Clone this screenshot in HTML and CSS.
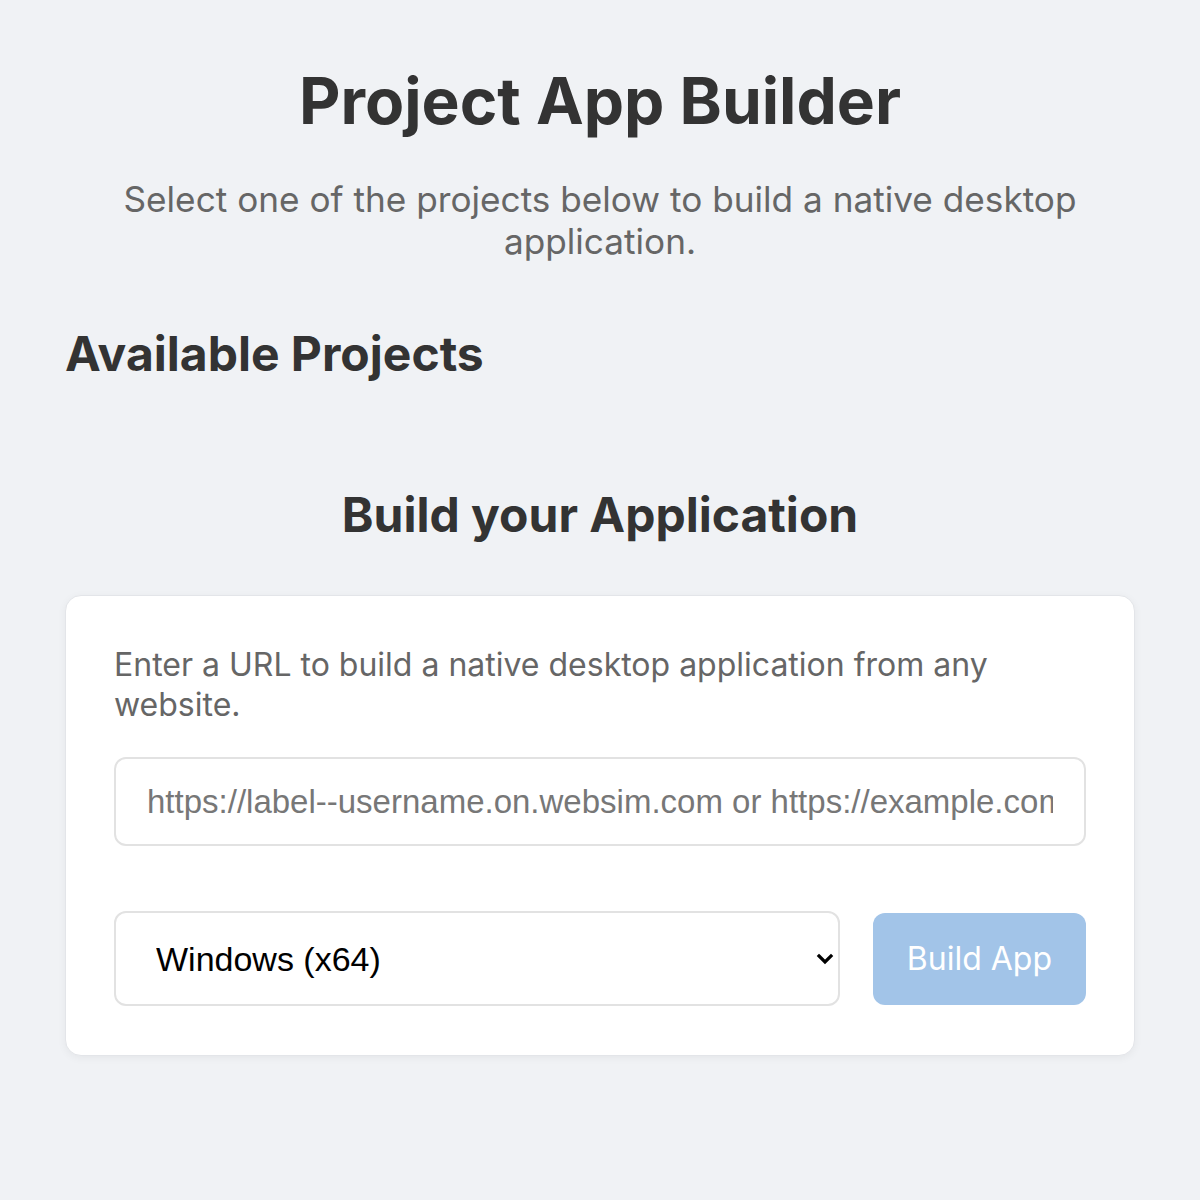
FILE: index.html
```html
<!DOCTYPE html>
<html lang="en">
    <head>
        <meta charset="utf-8">
        <meta name="viewport" content="width=device-width, initial-scale=1.0">
        <title>Project App Builder</title>
        <link rel="stylesheet" href="styles.css">
    </head>
    <body>
        <div id="app-container">
            <!-- page header -->
            <header class="page-header">
                <h1>Project App Builder</h1>
                <p class="subtitle">Select one of the projects below to build a native desktop application.</p>
            </header>

            <section id="projects">
                <h2 class="section-title">Available Projects</h2>
                <div id="projects-grid"></div>
            </section>

            <!-- builder form -->
            <section id="builder">
                <h2 class="builder-title">Build your Application</h2>
                <div class="card">
                    <p class="card-text">Enter a URL to build a native desktop application from any website.</p>
                    <input type="text" class="url-input" placeholder="https://label--username.on.websim.com or https://example.com">
                    <div class="build-row">
                        <div class="select-wrap">
                            <select class="platform-select">
                                <option>Windows (x64)</option>
                                <option>macOS (arm64)</option>
                                <option>Linux (x64)</option>
                            </select>
                            <!-- dropdown arrow -->
                            <svg class="select-arrow" width="18" height="12" viewBox="0 0 18 12">
                                <path d="M3 3 L9 9 L15 3" fill="none" stroke="#000" stroke-width="3.2" stroke-linecap="square"/>
                            </svg>
                        </div>
                        <button class="build-button" disabled>Build App</button>
                    </div>
                </div>
            </section>
        </div>
    </body>
</html>
```

FILE: styles.css
```css
/* page base */
body{
    font-family: Inter, "Noto Sans", sans-serif;
    background-color: #f0f2f5;
    color: #333;
    margin: 0;
}
#app-container{
    padding: 62px 65px 60px;
}
/* header */
.page-header{
    text-align: center;
}
.page-header h1{
    font-size: 64px;
    line-height: 78px;
    font-weight: 700;
    margin: 0 0 38px;
}
.subtitle{
    font-size: 35.2px;
    line-height: 42px;
    color: #666;
    margin: 0;
}
/* sections */
.section-title{
    font-size: 48px;
    line-height: 58px;
    font-weight: 700;
    margin: 63px 0 0;
}
#projects-grid{
    min-height: 103px;
}
.builder-title{
    font-size: 48px;
    line-height: 58px;
    font-weight: 700;
    text-align: center;
    margin: 0 0 51px;
}
/* the white card */
.card{
    background-color: #fff;
    border: 1px solid #e3e5e9;
    border-radius: 16px;
    padding: 49px 48px 49px;
    box-shadow: 0 2px 8px rgba(0, 0, 0, 0.05);
}
.card-text{
    font-size: 32px;
    line-height: 40px;
    color: #666;
    margin: 0 0 32px;
}
.url-input{
    display: block;
    box-sizing: border-box;
    width: 100%;
    height: 89px;
    padding: 0 31px;
    border: 2px solid #e2e2e2;
    border-radius: 12px;
    font-family: "Liberation Sans", Arial, sans-serif;
    font-size: 33px;
    color: #333;
    background-color: #fff;
}
.url-input::placeholder{
    color: #777;
}
.build-row{
    display: flex;
    align-items: center;
    gap: 33px;
    margin-top: 65px;
}
.select-wrap{
    flex: 1;
    position: relative;
}
.platform-select{
    display: block;
    width: 100%;
    box-sizing: border-box;
    height: 95px;
    padding: 0 40px 0 40px;
    border: 2px solid #e2e2e2;
    border-radius: 12px;
    font-family: "Liberation Sans", Arial, sans-serif;
    font-size: 34px;
    color: #000;
    background-color: #fff;
    appearance: none;
    -webkit-appearance: none;
}
/* arrow sits over the select */
.select-arrow{
    position: absolute;
    right: 6px;
    top: 42px;
    pointer-events: none;
}
.build-button{
    height: 92px;
    padding: 0 34px;
    border: none;
    border-radius: 12px;
    background-color: #a2c4e8;
    color: #fff;
    font-family: Inter, "Noto Sans", sans-serif;
    font-size: 32px;
}
```
